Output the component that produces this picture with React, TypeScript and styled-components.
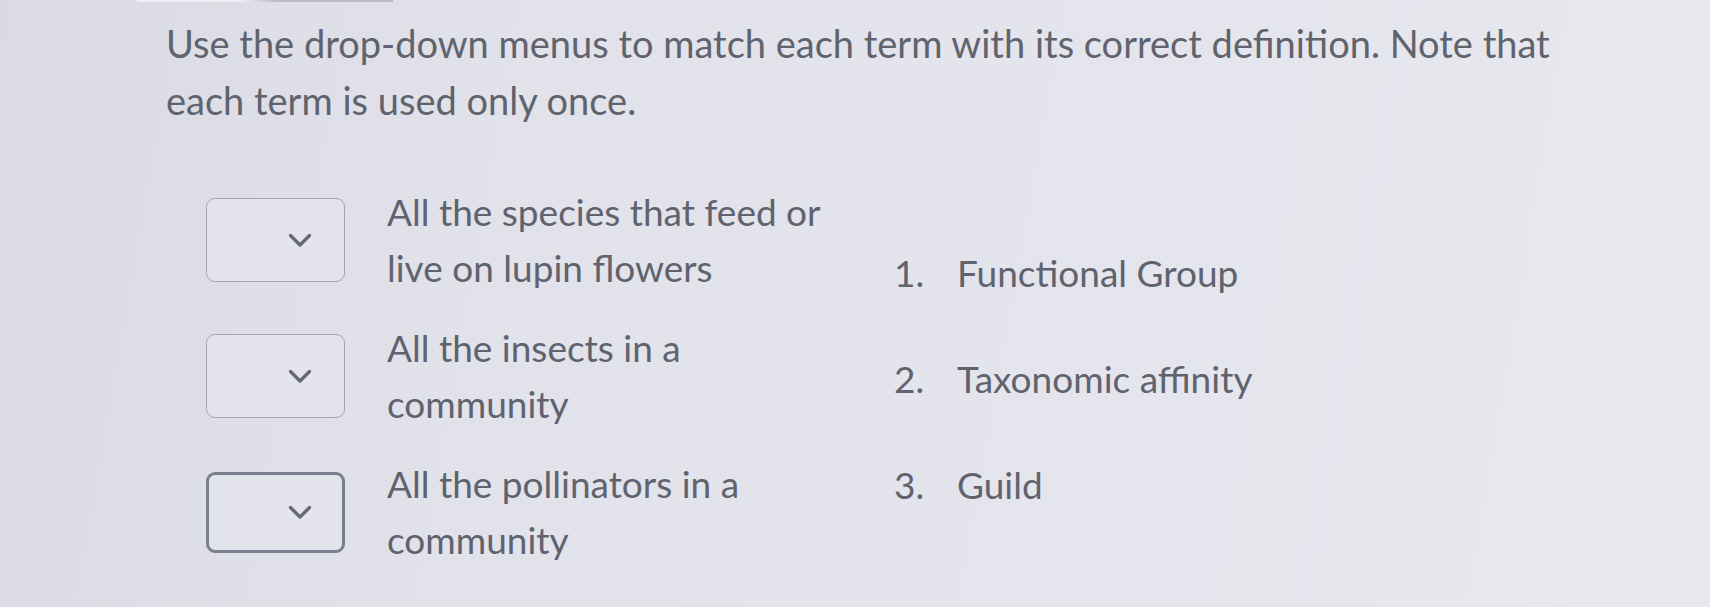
import React from 'react';
import styled, { createGlobalStyle } from 'styled-components';

const GlobalStyle = createGlobalStyle`
	html, body {
		margin: 0;
		padding: 0;
	}

	body {
		width: 1710px;
		height: 607px;
		overflow: hidden;
		font-family: Lato, 'Open Sans', sans-serif;
		background: linear-gradient(100deg, #d9dae3 0%, #e1e2ea 30%, #e5e6ed 70%, #e8e9ef 100%);
	}
`;

const Page = styled.div`
	padding: 0 0 0 166px;
	color: #60636e;
`;

const TopEdge = styled.div`
	margin-left: -29px;
	width: 256px;
	height: 2px;
	background: linear-gradient(90deg, #eceef2 0%, #eceef2 40%, #b9bcc5 55%, #b9bcc5 100%);
`;

const Prompt = styled.p`
	margin: 13px 0 0;
	width: 1400px;
	font-size: 38px;
	line-height: 57px;
`;

const Matching = styled.div`
	display: grid;
	grid-template-columns: auto auto;
	column-gap: 55px;
	justify-content: start;
	margin-top: 55px;
	margin-left: 40px;
`;

const Terms = styled.div`
	display: flex;
	flex-direction: column;
	gap: 24px;
`;

const TermRow = styled.div`
	display: flex;
	align-items: center;
	gap: 42px;
`;

const Select = styled.div<{ $focused?: boolean }>`
	flex: none;
	box-sizing: border-box;
	width: 139px;
	height: ${(p) => (p.$focused ? 81 : 84)}px;
	border: ${(p) => (p.$focused ? '3px solid #7a8090' : '1.5px solid #a3a5ad')};
	border-radius: 9px;
	background: #e4e5ec;
	display: flex;
	align-items: center;
	justify-content: flex-end;
	padding-right: ${(p) => (p.$focused ? 30 : 32)}px;
`;

const Definition = styled.div`
	width: 452px;
	font-size: 37px;
	line-height: 56px;
`;

const Options = styled.ol`
	list-style: none;
	margin: 0;
	padding: 60px 0 0;
	display: flex;
	flex-direction: column;
	gap: 49px;
`;

const Option = styled.li`
	display: flex;
	font-size: 37px;
	line-height: 57px;
	white-space: nowrap;
`;

const OptionNumber = styled.span`
	width: 63px;
	flex: none;
`;

const Chevron = () => (
	<svg width="24" height="15" viewBox="0 0 24 15" fill="none">
		<path d="M2.5 2.5 L12 12 L21.5 2.5" stroke="#686b76" strokeWidth="3.4" strokeLinecap="round" strokeLinejoin="round" />
	</svg>
);

const terms = [
	{ text: 'All the species that feed or live on lupin flowers' },
	{ text: 'All the insects in a community' },
	{ text: 'All the pollinators in a community', focused: true },
];

const options = ['Functional Group', 'Taxonomic affinity', 'Guild'];

export default function App() {
	return (
		<>
			<GlobalStyle />
			<Page>
				<TopEdge />
				<Prompt>
					Use the drop-down menus to match each term with its correct definition. Note that each term is used
					only once.
				</Prompt>
				<Matching>
					<Terms>
						{terms.map((t) => (
							<TermRow key={t.text}>
								<Select $focused={t.focused}>
									<Chevron />
								</Select>
								<Definition>{t.text}</Definition>
							</TermRow>
						))}
					</Terms>
					<Options>
						{options.map((o, i) => (
							<Option key={o}>
								<OptionNumber>{i + 1}.</OptionNumber>
								{o}
							</Option>
						))}
					</Options>
				</Matching>
			</Page>
		</>
	);
}
